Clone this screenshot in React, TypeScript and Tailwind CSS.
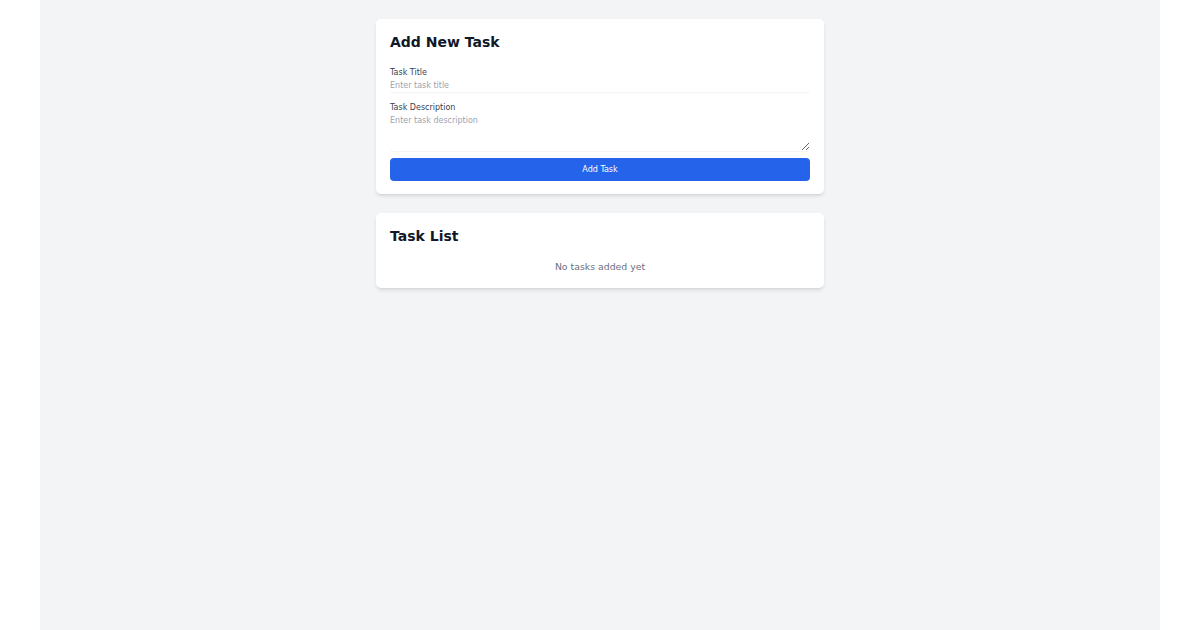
import { useState } from "react";

type Task = {
  id: number;
  title: string;
  description: string;
};

export default function App() {
  const [tasks, setTasks] = useState<Task[]>([]);
  const [title, setTitle] = useState("");
  const [description, setDescription] = useState("");

  const addTask = (e: React.FormEvent) => {
    e.preventDefault();
    if (!title.trim()) return;
    setTasks([...tasks, { id: Date.now(), title, description }]);
    setTitle("");
    setDescription("");
  };

  return (
    <div className="min-h-screen bg-white font-['DejaVu_Sans',sans-serif]">
      <div className="mx-10 min-h-[630px] bg-[#f3f4f6] pt-[19px]">
        <div className="mx-auto w-[448px]">
          <form
            onSubmit={addTask}
            className="mb-[19px] rounded-[5px] bg-white px-[14px] pt-[14px] pb-[13px] shadow-[0_3px_4px_-1px_rgba(0,0,0,0.1),0_1px_3px_-1px_rgba(0,0,0,0.1)]"
          >
            <h2 className="mb-[16px] text-[14px] leading-[18px] font-bold text-[#111827]">
              Add New Task
            </h2>
            <div className="mb-[10px]">
              <label className="block text-[8px] leading-[11px] text-[#374151]">
                Task Title
              </label>
              <input
                type="text"
                value={title}
                onChange={(e) => setTitle(e.target.value)}
                placeholder="Enter task title"
                className="mt-[2px] block h-[12px] w-full rounded-[4px] text-[8px] leading-[12px] text-[#111827] shadow-[0_0.5px_1px_rgba(0,0,0,0.05)] outline-none placeholder:text-[#9ca3af]"
              />
            </div>
            <div className="mb-[7px]">
              <label className="block text-[8px] leading-[11px] text-[#374151]">
                Task Description
              </label>
              <textarea
                rows={3}
                value={description}
                onChange={(e) => setDescription(e.target.value)}
                placeholder="Enter task description"
                className="mt-[2px] block h-[36px] w-full rounded-[4px] text-[8px] leading-[12px] text-[#111827] shadow-[0_0.5px_1px_rgba(0,0,0,0.05)] outline-none placeholder:text-[#9ca3af]"
              />
            </div>
            <button
              type="submit"
              className="flex h-[23px] w-full items-center justify-center rounded-[4px] bg-[#2563eb] text-[8px] leading-[12px] text-white"
            >
              Add Task
            </button>
          </form>

          <div className="rounded-[5px] bg-white px-[14px] pt-[14px] pb-[15px] shadow-[0_3px_4px_-1px_rgba(0,0,0,0.1),0_1px_3px_-1px_rgba(0,0,0,0.1)]">
            <h2 className="mb-[15px] text-[14px] leading-[18px] font-bold text-[#111827]">
              Task List
            </h2>
            {tasks.length === 0 ? (
              <p className="text-center text-[9.33px] leading-[13px] text-[#6b7280]">
                No tasks added yet
              </p>
            ) : (
              <ul className="flex flex-col gap-2">
                {tasks.map((t) => (
                  <li key={t.id} className="rounded-[4px] border border-[#e5e7eb] p-2">
                    <h3 className="text-[9px] font-bold text-[#1f2937]">{t.title}</h3>
                    <p className="text-[8px] text-[#4b5563]">{t.description}</p>
                  </li>
                ))}
              </ul>
            )}
          </div>
        </div>
      </div>
    </div>
  );
}
